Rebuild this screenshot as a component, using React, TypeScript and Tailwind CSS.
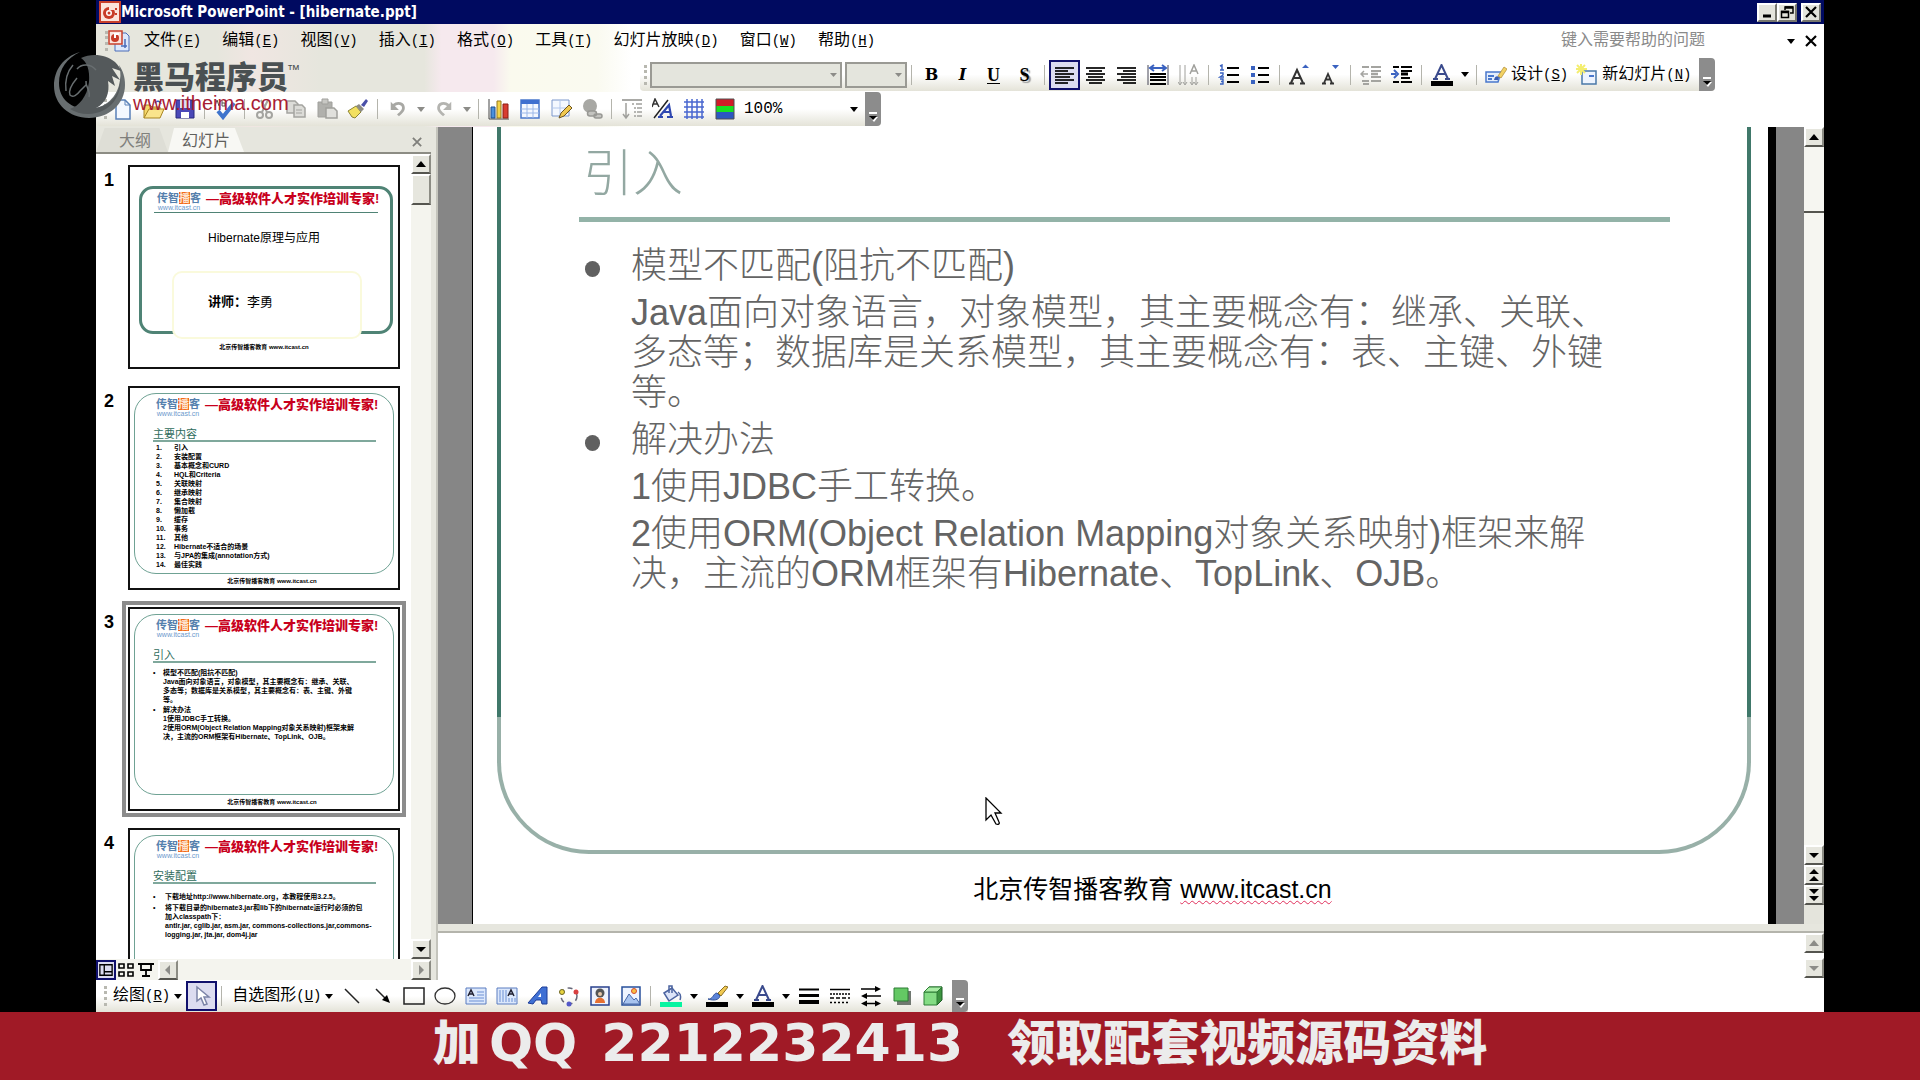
import type { ReactNode } from "react";

const DARK = "#3a4a8c";

function Icon({ children, size = 22 }: { children: ReactNode; size?: number }) {
  return (
    <svg width={size} height={size} viewBox="0 0 22 22" fill="none" aria-hidden="true" className="shrink-0">
      {children}
    </svg>
  );
}

function ToolButton({
  label,
  active = false,
  children,
}: {
  label: string;
  active?: boolean;
  children: ReactNode;
}) {
  return (
    <button
      type="button"
      aria-label={label}
      className={
        active
          ? "flex h-[30px] w-[31px] shrink-0 items-center justify-center border-2 border-[#10106c] bg-[#dcdcf0]"
          : "flex h-[30px] w-[31px] shrink-0 items-center justify-center"
      }
    >
      {children}
    </button>
  );
}

function Arrow({ label, dim = false }: { label: string; dim?: boolean }) {
  return (
    <button type="button" aria-label={label} className="flex h-[30px] w-[15px] shrink-0 items-center justify-center">
      <svg width="8" height="5" viewBox="0 0 8 5" aria-hidden="true">
        <path d="M0 0h8L4 5z" fill={dim ? "#8c8c88" : "#000"} />
      </svg>
    </button>
  );
}

function Combo({ label, width }: { label: string; width: string }) {
  return (
    <span className={`relative ml-[3px] h-[26px] shrink-0 ${width}`}>
      <select
        aria-label={label}
        disabled
        className="block h-full w-full appearance-none border-2 border-[#9a9a94] bg-[#e4e5dd]"
      />
      <svg width="7" height="4" viewBox="0 0 7 4" className="absolute top-[11px] right-[5px]" aria-hidden="true">
        <path d="M0 0h7L3.500 4z" fill="#8c8c88" />
      </svg>
    </span>
  );
}

function Sep() {
  return <span className="mx-1 h-5 w-px shrink-0 bg-[#b4b4ac]" />;
}

function Handle() {
  return <span className="h-5 w-[3px] shrink-0 border-l-[3px] border-dotted border-[#b8b8b0]" />;
}

function BarEnd({ label }: { label: string }) {
  return (
    <button
      type="button"
      aria-label={label}
      className="flex h-full w-4 shrink-0 items-end justify-center rounded-r bg-[#8c8c8c] pb-1"
    >
      <svg width="10" height="10" viewBox="0 0 10 10" aria-hidden="true">
        <path d="M1 1h8" stroke="#fff" strokeWidth="2" />
        <path d="M2 5h8l-4 5z" fill="#fff" />
        <path d="M1 4h8L5 8z" fill="#000" />
      </svg>
    </button>
  );
}

function Hot({ text, hotkey }: { text: string; hotkey: string }) {
  return (
    <>
      {text}
      <span className="text-sm">
        (<u>{hotkey}</u>)
      </span>
    </>
  );
}

const menus = [
  ["文件", "F"],
  ["编辑", "E"],
  ["视图", "V"],
  ["插入", "I"],
  ["格式", "O"],
  ["工具", "T"],
  ["幻灯片放映", "D"],
  ["窗口", "W"],
  ["帮助", "H"],
];

function PptLogo() {
  return (
    <Icon>
      <rect x="1" y="1" width="20" height="20" fill="#fbe4dc" stroke="#c8402c" strokeWidth="2" />
      <circle cx="10" cy="12" r="6" fill="#c83c28" />
      <circle cx="10" cy="12" r="3" fill="#fff" />
      <circle cx="10" cy="12" r="1.5" fill="#c83c28" />
      <path d="M10 4v5h7V4z" fill="#fbe4dc" />
      <path d="M17 7v2M17 12v2" stroke="#c83c28" strokeWidth="2" />
    </Icon>
  );
}

function TitleBar() {
  const box =
    "flex h-[19px] w-5 items-center justify-center border-2 border-t-white border-l-white border-r-[#77776f] border-b-[#77776f] bg-[#e4e4dc]";
  return (
    <header className="flex h-6 shrink-0 items-center bg-[#000a60] px-[3px]">
      <PptLogo />
      <h1 className="font-['DejaVu_Sans_Condensed','DejaVu_Sans',sans-serif] text-[15px] leading-6 font-bold text-white">
        Microsoft PowerPoint - [hibernate.ppt]
      </h1>
      <div className="ml-auto flex">
        <button type="button" aria-label="最小化" className={box}>
          <svg width="14" height="14" viewBox="0 0 14 14">
            <path d="M3 11h8" stroke="#000" strokeWidth="3" />
          </svg>
        </button>
        <button type="button" aria-label="还原" className={box}>
          <svg width="14" height="14" viewBox="0 0 14 14" fill="none" stroke="#000">
            <path d="M5 5V2h8v6h-3" strokeWidth="1.5" />
            <path d="M5 2.5h8M1 7h8" strokeWidth="2.5" />
            <path d="M1.500 6.500h7v6h-7z" strokeWidth="1.5" />
          </svg>
        </button>
        <button type="button" aria-label="关闭" className={`${box} ml-1`}>
          <svg width="14" height="14" viewBox="0 0 14 14">
            <path d="M2 2l10 10M12 2L2 12" stroke="#000" strokeWidth="2.2" />
          </svg>
        </button>
      </div>
    </header>
  );
}

function MenuBar() {
  return (
    <nav className="flex h-8 shrink-0 items-center pt-[2px] pl-[9px]">
      <Handle />
      <span className="flex w-9">
        <Icon>
          <path d="M7 3h11l3 3v15H7z" fill="#dce8fb" stroke="#4a6cb8" />
          <path d="M17 9v9M13 16h6" stroke="#4a6cb8" strokeWidth="1.500" />
          <rect x="1" y="1" width="13" height="13" fill="#fbe4dc" stroke="#c8402c" strokeWidth="1.500" />
          <circle cx="7" cy="8" r="4" fill="#c83c28" />
          <path d="M7 8V4h4" stroke="#fff" strokeWidth="2" />
        </Icon>
      </span>
      <div className="flex gap-[21px]">
        {menus.map(([text, key]) => (
          <button key={text} type="button" className="text-base leading-6 whitespace-nowrap text-black">
            <Hot text={text} hotkey={key} />
          </button>
        ))}
      </div>
      <input
        aria-label="键入需要帮助的问题"
        placeholder="键入需要帮助的问题"
        className="ml-auto h-6 w-[222px] bg-transparent text-base leading-6 outline-none placeholder:text-[#8a8a8a]"
      />
      <Arrow label="帮助列表" />
      <button type="button" aria-label="关闭文档" className="flex h-6 w-[26px] items-center justify-center">
        <svg width="12" height="12" viewBox="0 0 12 12">
          <path d="M1 1l10 10M11 1L1 11" stroke="#000" strokeWidth="2.200" />
        </svg>
      </button>
    </nav>
  );
}

function Lines({ rows, color = "#000" }: { rows: number[][]; color?: string }) {
  return (
    <Icon>
      {rows.map(([x1, x2, y]) => (
        <path key={`${x1}-${y}`} d={`M${x1} ${y}H${x2}`} stroke={color} strokeWidth="1.700" />
      ))}
    </Icon>
  );
}

function FormatBar() {
  return (
    <div className="flex h-9 shrink-0 items-start pt-[2px]">
      <div className="ml-[544px] flex h-[33px] items-center rounded bg-linear-to-b from-white from-50% to-[#e4e3d8] pl-1">
        <Handle />
        <Combo label="字体" width="w-48" />
        <Combo label="字号" width="w-[62px]" />
        <Sep />
        <div className="flex font-['Liberation_Serif',serif] text-lg font-bold text-black">
          <ToolButton label="加粗">
            <span className="font-['DejaVu_Serif',serif] text-base">B</span>
          </ToolButton>
          <ToolButton label="倾斜">
            <span className="font-['DejaVu_Serif',serif] text-base italic">I</span>
          </ToolButton>
          <ToolButton label="下划线">
            <span className="underline underline-offset-2">U</span>
          </ToolButton>
          <ToolButton label="阴影">
            <span className="text-shadow-[2px_2px_1px_#999]">S</span>
          </ToolButton>
        </div>
        <Sep />
        <ToolButton label="左对齐" active>
          <Lines rows={[[1, 20, 4], [1, 14, 7], [1, 20, 10], [1, 16, 13], [1, 20, 16], [1, 14, 19]]} />
        </ToolButton>
        <ToolButton label="居中">
          <Lines rows={[[1, 20, 4], [4, 17, 7], [1, 20, 10], [3, 18, 13], [1, 20, 16], [4, 17, 19]]} />
        </ToolButton>
        <ToolButton label="右对齐">
          <Lines rows={[[1, 20, 4], [7, 20, 7], [1, 20, 10], [5, 20, 13], [1, 20, 16], [7, 20, 19]]} />
        </ToolButton>
        <ToolButton label="分散对齐">
          <Icon>
            <path d="M1 1v20M21 1v20" stroke="#445" />
            <path d="M3 4h16M7 1L3 4l4 3M15 1l4 3-4 3" stroke="#3a62c0" strokeWidth="2" />
            <path d="M3 10h16M3 13h16M3 16h16M3 20h16" stroke="#000" strokeWidth="2" />
          </Icon>
        </ToolButton>
        <ToolButton label="更改文字方向">
          <Icon>
            <path d="M2 1v19M7 1v19M14 13v7M18 13v7M0 18l2 3 2-3M5 18l2 3 2-3M12 18l2 3 2-3M16 18l2 3 2-3" stroke="#a0a09c" />
            <path d="M12 10l4-9 4 9M13 7h5" stroke="#a0a09c" strokeWidth="1.500" />
          </Icon>
        </ToolButton>
        <Sep />
        <ToolButton label="编号">
          <Icon>
            <path d="M9 4h12M9 11h12M9 18h12" stroke="#000" strokeWidth="2" />
            <path d="M2 2l2-1v5M2 6h4M2 9h3v2l-3 2h4M2 15h3v5H2M3 17.500h2" stroke="#3a62c0" strokeWidth="1.400" />
          </Icon>
        </ToolButton>
        <ToolButton label="项目符号">
          <Icon>
            <path d="M9 4h11M9 11h11M9 18h11" stroke="#000" strokeWidth="2" />
            <path d="M2 2h4v4H2zM2 9h4v4H2zM2 16h4v4H2z" fill="#3a62c0" />
          </Icon>
        </ToolButton>
        <Sep />
        <ToolButton label="增大字号">
          <Icon>
            <path d="M2 19L8 6l6 13M4.500 14h7M0 19.500h5M11 19.500h5" stroke="#333" strokeWidth="2" />
            <path d="M13 4l3.500-3.500L20 4z" fill="#3a62c0" />
          </Icon>
        </ToolButton>
        <ToolButton label="减小字号">
          <Icon>
            <path d="M4 19l4-9 4 9M5.500 15.500h5M2 19.500h4M10 19.500h4" stroke="#333" strokeWidth="1.800" />
            <path d="M12 1h7l-3.500 4z" fill="#3a62c0" />
          </Icon>
        </ToolButton>
        <Sep />
        <ToolButton label="减少缩进量">
          <Icon>
            <path d="M2 3h7M11 3h10M11 7h10M11 13h10M2 17h7M11 17h10M3 20h6" stroke="#a4a4a0" strokeWidth="1.800" />
            <path d="M11 10h7" stroke="#a4a4a0" strokeWidth="2.500" />
            <path d="M8 10H1M4 7l-3 3 3 3" stroke="#a4a4a0" strokeWidth="1.500" />
          </Icon>
        </ToolButton>
        <ToolButton label="增加缩进量">
          <Icon>
            <path d="M2 3h6M10 3h11M10 7h11M10 14h9M2 18h6M10 18h11" stroke="#000" strokeWidth="2" />
            <path d="M10 10h7" stroke="#000" strokeWidth="3" />
            <path d="M0 10h5M3 6l4 4-4 4" stroke="#3a62c0" strokeWidth="2" />
          </Icon>
        </ToolButton>
        <Sep />
        <ToolButton label="字体颜色">
          <FontColor />
        </ToolButton>
        <Arrow label="字体颜色列表" />
        <Sep />
        <button type="button" className="ml-1 flex items-center gap-1 text-base leading-6 whitespace-nowrap text-black">
          <Icon>
            <path d="M1 8h15l-3 10H1z" fill="#e4eefc" stroke="#4a78cc" strokeWidth="1.500" />
            <path d="M3 12h6M3 15h4" stroke="#4a78cc" strokeWidth="2" />
            <path d="M9 16c1-5 4-4 5-3l-1 3z" fill="#3a5cb0" />
            <path d="M13 12l6-9 3 2-6 9z" fill="#f2d264" stroke="#b08a30" strokeWidth=".700" />
          </Icon>
          <span>
            <Hot text="设计" hotkey="S" />
          </span>
        </button>
        <button type="button" className="ml-2 flex items-center gap-1 text-base leading-6 whitespace-nowrap text-black">
          <Icon>
            <path d="M6 7h14v13H6z" fill="#eef4fe" stroke="#4a78a8" strokeWidth="1.500" />
            <path d="M13 12h5" stroke="#4a78cc" strokeWidth="2" />
            <path d="M5 0v11M0 5h11M1 1l8 8M9 1L1 9" stroke="#f4ee70" strokeWidth="2" />
          </Icon>
          <span>
            <Hot text="新幻灯片" hotkey="N" />
          </span>
        </button>
        <span className="w-2 shrink-0" />
        <BarEnd label="工具栏选项" />
      </div>
    </div>
  );
}

function FontColor() {
  return (
    <Icon>
      <path d="M4 15L10.500 1 17 15M7 10h7M2 15h5M14 15h5" stroke={DARK} strokeWidth="2" />
      <path d="M0 17h22v5H0z" fill="#000" />
    </Icon>
  );
}

function StandardBar() {
  return (
    <div className="flex h-[35px] shrink-0 items-start">
      <div className="flex h-[34px] items-center rounded bg-linear-to-b from-white from-50% to-[#e4e3d8] pl-2">
        <Handle />
        <ToolButton label="新建">
          <Icon>
            <path d="M4 2h9l5 5v14H4z" fill="#f4f8ff" stroke="#5a80b8" strokeWidth="1.500" />
            <path d="M13 2v5h5" stroke="#5a80b8" />
          </Icon>
        </ToolButton>
        <ToolButton label="打开">
          <Icon>
            <path d="M1 20V7h6l2 2h8v3" fill="#f4d668" stroke="#a88420" />
            <path d="M1 20l5-9h15l-4 9z" fill="#fae48c" stroke="#a88420" />
            <path d="M12 5c2-3 5-2 6 1" stroke="#3a62c0" strokeWidth="1.500" />
          </Icon>
        </ToolButton>
        <ToolButton label="保存">
          <Icon>
            <path d="M2 2h18v18H2z" fill="#4a48b8" stroke="#28287c" />
            <path d="M6 2h10v8H6z" fill="#dde0f4" />
            <path d="M7 14h8v6H7z" fill="#fff" />
          </Icon>
        </ToolButton>
        <Sep />
        <ToolButton label="拼写检查">
          <Icon>
            <path d="M4 13l5 6L20 5" stroke="#3f74cc" strokeWidth="4" />
            <path d="M1 8l2-6 2 6M8 2v6h3V5H8" stroke="#555" />
          </Icon>
        </ToolButton>
        <Sep />
        <ToolButton label="剪切">
          <Icon>
            <path d="M7 2l6 12M14 2L8 14" stroke="#a4a4a0" strokeWidth="2" />
            <circle cx="6" cy="17" r="3" stroke="#a4a4a0" strokeWidth="2" />
            <circle cx="15" cy="17" r="3" stroke="#a4a4a0" strokeWidth="2" />
          </Icon>
        </ToolButton>
        <ToolButton label="复制">
          <Icon>
            <path d="M2 3h8l3 3v9H2z" fill="#dcdcd8" stroke="#a4a4a0" strokeWidth="1.500" />
            <path d="M9 7h8l3 3v9H9z" fill="#dcdcd8" stroke="#a4a4a0" strokeWidth="1.500" />
            <path d="M11 12h6M11 15h6" stroke="#a4a4a0" />
          </Icon>
        </ToolButton>
        <ToolButton label="粘贴">
          <Icon>
            <path d="M2 4h14v15H2z" fill="#b0b0ac" stroke="#a0a09c" />
            <path d="M6 1h6v5H6z" fill="#c8c8c4" stroke="#a0a09c" />
            <path d="M10 10h8l3 3v7H10z" fill="#e0e0dc" stroke="#a0a09c" strokeWidth="1.500" />
          </Icon>
        </ToolButton>
        <ToolButton label="格式刷">
          <Icon>
            <path d="M1 13l8-5 5 6-6 6-3-1z" fill="#f2e060" stroke="#8c8434" />
            <path d="M9 8l3-2 5 5-3 3z" fill="#8c8c84" />
            <path d="M14 7l5-6 2 2-4 6z" fill="#4a50a8" />
          </Icon>
        </ToolButton>
        <Sep />
        <ToolButton label="撤消">
          <Icon size={20}>
            <path d="M6 7c5-4 11-2 11 3 0 4-3 5-6 8" stroke="#a8a8a4" strokeWidth="3" />
            <path d="M3 3v9h9z" fill="#a8a8a4" />
          </Icon>
        </ToolButton>
        <Arrow label="撤消列表" dim />
        <ToolButton label="恢复">
          <Icon size={20}>
            <path d="M16 7C11 3 5 5 5 10c0 4 3 5 6 8" stroke="#b4b4b0" strokeWidth="3" />
            <path d="M19 3v9h-9z" fill="#b4b4b0" />
          </Icon>
        </ToolButton>
        <Arrow label="恢复列表" dim />
        <Sep />
        <ToolButton label="插入图表">
          <Icon>
            <path d="M1 1v20h20" stroke="#444" />
            <path d="M3 9h4v11H3z" fill="#4a90dc" stroke="#1c4c90" />
            <path d="M9 3h4v17H9z" fill="#f4d448" stroke="#94781c" />
            <path d="M15 6h5v14h-5z" fill="#d83c30" stroke="#8c1c14" />
          </Icon>
        </ToolButton>
        <ToolButton label="插入表格">
          <Icon>
            <path d="M2 2h18v18H2z" fill="#f4f8ff" stroke="#4a78cc" strokeWidth="1.500" />
            <path d="M2 2h18v4H2z" fill="#3f70d0" />
            <path d="M8 6v14M14 6v14M2 11h18M2 15h18" stroke="#9cb8e8" />
          </Icon>
        </ToolButton>
        <ToolButton label="表格和边框">
          <Icon>
            <path d="M2 2h17v16H2z" fill="#f4f8ff" stroke="#7c98cc" />
            <path d="M10 2v16M2 10h17" stroke="#b4c8ec" />
            <path d="M9 20l2-5 8-8 3 3-8 8z" fill="#f0c850" stroke="#6c5420" />
          </Icon>
        </ToolButton>
        <ToolButton label="插入超链接">
          <Icon>
            <circle cx="9" cy="8" r="7" fill="#a8a8a4" />
            <path d="M9 13h4a2 2 0 010 5H9a2 2 0 010-5M15 16h4a2 2 0 010 4h-4a2 2 0 010-4" fill="#c4c4c0" stroke="#989894" strokeWidth="1.500" />
          </Icon>
        </ToolButton>
        <Sep />
        <ToolButton label="全部展开">
          <Icon>
            <path d="M1 2h20" stroke="#8c8c88" strokeWidth="1.500" />
            <path d="M5 5v14M2 16l3 4 3-4" stroke="#a0a09c" strokeWidth="1.500" />
            <path d="M11 6h2M15 6h6M13 10h2M16 10h5M13 14h2M16 14h5M13 18h2M16 18h5" stroke="#a0a09c" strokeWidth="1.500" />
          </Icon>
        </ToolButton>
        <ToolButton label="显示格式">
          <Icon>
            <path d="M0 9l3-8 4 8M1 6h5" stroke="#333" strokeWidth="1.500" />
            <path d="M2 20L16 2" stroke="#222" strokeWidth="1.500" />
            <path d="M8 18l9-11 2 11M12 14h6M6 19h5M15 19h6" stroke="#2f48b0" strokeWidth="2.200" />
          </Icon>
        </ToolButton>
        <ToolButton label="显示网格">
          <Icon>
            <path d="M4 1v20M9 1v20M14 1v20M19 1v20M1 4h20M1 9h20M1 14h20M1 19h20" stroke="#4a68d0" strokeWidth="1.500" />
          </Icon>
        </ToolButton>
        <ToolButton label="颜色/灰度">
          <Icon>
            <path d="M2 1h18v7H2z" fill="#d01c28" />
            <path d="M2 8h18v6H2z" fill="#18e020" />
            <path d="M2 14h18v7H2z" fill="#2c58c0" />
            <path d="M2 1h18v20H2z" stroke="#505050" />
          </Icon>
        </ToolButton>
        <input
          aria-label="显示比例"
          defaultValue="100%"
          className="ml-1 h-6 w-[102px] bg-transparent text-base leading-6 text-black outline-none"
        />
        <Arrow label="显示比例列表" />
        <span className="w-1 shrink-0" />
        <BarEnd label="工具栏选项" />
      </div>
    </div>
  );
}

function ScrollButton({ label, d, dim = false }: { label: string; d: string; dim?: boolean }) {
  return (
    <button
      type="button"
      aria-label={label}
      className="flex h-5 w-full shrink-0 items-center justify-center border-2 border-t-white border-l-white border-r-[#8c8c84] border-b-[#55554f] bg-[#e6e6de]"
    >
      <svg width="12" height="14" viewBox="0 0 12 14" aria-hidden="true">
        <path d={d} fill={dim ? "#8c8c88" : "#000"} />
      </svg>
    </button>
  );
}

const UP = "M1 10h10L6 4z";
const DOWN = "M1 5h10L6 10z";

function Brand() {
  return (
    <div className="mt-1 ml-5 flex items-start gap-1">
      <div className="w-[46px] shrink-0 text-center">
        <p className="text-[11px] leading-[12px] font-bold whitespace-nowrap text-[#5580ad]">
          传智<span className="bg-[#f26a1c] text-[#fde4d0]">播</span>客
        </p>
        <p className="text-[7px] leading-[7px] text-[#6a98cc]">www.itcast.cn</p>
      </div>
      <p className="text-[13px] leading-[14px] font-black whitespace-nowrap text-[#c8001c]">—高级软件人才实作培训专家!</p>
    </div>
  );
}

function Frame({ title, footer = true, children }: { title: string; footer?: boolean; children: ReactNode }) {
  return (
    <>
      <div className="mx-1 mt-[5px] h-[181px] shrink-0 rounded-[22px] border border-[#6fa294]">
        <Brand />
        <div className="mr-[17px] ml-[18px]">
          <h3 className="mt-[11px] border-b-2 border-[#7fa89c] text-[11px] leading-[12px] text-[#2f6c5c]">{title}</h3>
          {children}
        </div>
      </div>
      {footer && (
        <p className="pl-4 text-center text-[6px] leading-[14px] font-bold text-black">北京传智播客教育 www.itcast.cn</p>
      )}
    </>
  );
}

const topics = [
  "引入",
  "安装配置",
  "基本概念和CURD",
  "HQL和Criteria",
  "关联映射",
  "继承映射",
  "集合映射",
  "懒加载",
  "缓存",
  "事务",
  "其他",
  "Hibernate不适合的场景",
  "与JPA的集成(annotation方式)",
  "最佳实践",
];

function CoverThumb() {
  return (
    <>
      <div className="relative mr-[5px] ml-[9px] mt-[19px] h-[148px] rounded-[14px] border-[3px] border-[#4f8375]">
        <div className="-mt-px -ml-[6px]">
          <Brand />
        </div>
        <hr className="mx-3 mt-px border-[#4f8375]" />
        <h3 className="mt-[17px] pl-[66px] text-xs leading-4 whitespace-nowrap text-black">Hibernate原理与应用</h3>
        <div className="absolute top-[82px] left-[30px] flex h-[68px] w-[190px] items-center rounded-[10px] border-2 border-[#fafadc] bg-white pb-[6px] pl-[34px]">
          <p className="text-[13px] leading-4 text-black">
            <b>讲师：</b>李勇
          </p>
        </div>
      </div>
      <p className="mt-[6px] text-center text-[6px] leading-[14px] font-bold text-black">
        北京传智播客教育 www.itcast.cn
      </p>
    </>
  );
}

function TopicsThumb() {
  return (
    <Frame title="主要内容">
      <ol className="mt-px text-[7px] leading-[9px] font-bold text-black">
        {topics.map((topic, i) => (
          <li key={topic} className="flex">
            <span className="w-[21px] shrink-0 pl-[3px]">{i + 1}.</span>
            {topic}
          </li>
        ))}
      </ol>
    </Frame>
  );
}

function IntroThumb() {
  return (
    <Frame title="引入">
      <ul className="mt-[5px] flex flex-col gap-px text-[7px] leading-[9px] font-bold whitespace-nowrap text-black">
        <li className="flex">
          <span className="w-[10px] shrink-0">•</span>
          <p>
            模型不匹配(阻抗不匹配)
            <br />
            Java面向对象语言，对象模型，其主要概念有：继承、关联、
            <br />
            多态等；数据库是关系模型，其主要概念有：表、主键、外键
            <br />
            等。
          </p>
        </li>
        <li className="flex">
          <span className="w-[10px] shrink-0">•</span>
          <p>
            解决办法
            <br />
            1使用JDBC手工转换。
            <br />
            2使用ORM(Object Relation Mapping对象关系映射)框架来解
            <br />
            决，主流的ORM框架有Hibernate、TopLink、OJB。
          </p>
        </li>
      </ul>
    </Frame>
  );
}

function SetupThumb() {
  return (
    <Frame title="安装配置" footer={false}>
      <ul className="mt-[8px] flex flex-col gap-[2px] text-[7px] leading-[9px] font-bold whitespace-nowrap text-black">
        <li className="flex">
          <span className="w-[12px] shrink-0">•</span>
          下载地址http://www.hibernate.org，本教程使用3.2.5。
        </li>
        <li className="flex">
          <span className="w-[12px] shrink-0">•</span>
          <p>
            将下载目录的hibernate3.jar和lib下的hibernate运行时必须的包
            <br />
            加入classpath下：
            <br />
            antlr.jar, cglib.jar, asm.jar, commons-collections.jar,commons-
            <br />
            logging.jar, jta.jar, dom4j.jar
          </p>
        </li>
      </ul>
    </Frame>
  );
}

const thumbs = [<CoverThumb />, <TopicsThumb />, <IntroThumb />, <SetupThumb />];

function SlidePanel() {
  return (
    <aside className="flex w-[342px] shrink-0 flex-col border-r-2 border-[#c4c4bc] bg-[#e6e6de] pr-[5px]">
      <div className="flex h-[27px] shrink-0 items-end border-b-2 border-[#8c8c84] text-base leading-[26px] text-[#80807c]">
        <button type="button" className="h-6 w-[72px] bg-[#deded6] pl-[6px] [clip-path:polygon(12%_0,88%_0,100%_100%,0_100%)]">
          大纲
        </button>
        <button type="button" className="h-6 w-[76px] bg-[#f8f8f4] text-[#60605c] [clip-path:polygon(8%_0,88%_0,100%_100%,0_100%)]">
          幻灯片
        </button>
        <button type="button" aria-label="关闭窗格" className="mr-2 mb-1 ml-auto">
          <svg width="11" height="11" viewBox="0 0 12 12">
            <path d="M1 1l9 9M10 1l-9 9" stroke="#80807c" strokeWidth="2" />
          </svg>
        </button>
      </div>
      <div className="flex min-h-0 flex-1">
        <ol className="flex min-w-0 flex-1 flex-col gap-[17px] overflow-hidden bg-white pt-[11px]">
          {thumbs.map((thumb, i) => (
            <li key={i} className="flex shrink-0">
              <span className="w-8 shrink-0 pt-[5px] pl-2 text-lg leading-5 font-bold text-black">{i + 1}</span>
              <button
                type="button"
                aria-label={`幻灯片 ${i + 1}`}
                className={
                  i === 2
                    ? "flex h-[204px] w-[272px] flex-col items-stretch overflow-hidden border-2 border-[#111] bg-white text-left outline-4 outline-offset-2 outline-[#8c8c8c]"
                    : "flex h-[204px] w-[272px] flex-col items-stretch overflow-hidden border-2 border-[#111] bg-white text-left"
                }
              >
                {thumb}
              </button>
            </li>
          ))}
        </ol>
        <div className="flex w-5 shrink-0 flex-col bg-[#f4f4ee]">
          <ScrollButton label="向上滚动" d={UP} />
          <span className="h-[31px] border-2 border-t-white border-l-white border-r-[#8c8c84] border-b-[#55554f] bg-[#e6e6de]" />
          <span className="flex-1" />
          <ScrollButton label="向下滚动" d={DOWN} />
        </div>
      </div>
      <div className="flex h-[21px] shrink-0 items-center bg-[#f4f4ee]">
        <button type="button" aria-label="普通视图" className="flex h-5 w-5 items-center justify-center border-2 border-[#10106c] bg-[#dcdcf0]">
          <svg width="14" height="14" viewBox="0 0 16 14" fill="none" stroke="#000" strokeWidth="1.500">
            <path d="M1 1h14v12H1zM6 1v12M6 9h9" />
          </svg>
        </button>
        <button type="button" aria-label="幻灯片浏览视图" className="flex w-5 justify-center">
          <svg width="16" height="14" viewBox="0 0 16 14" fill="none" stroke="#000" strokeWidth="1.600">
            <path d="M1 1h5v4H1zM10 1h5v4h-5zM1 9h5v4H1zM10 9h5v4h-5z" />
          </svg>
        </button>
        <button type="button" aria-label="幻灯片放映" className="flex w-5 justify-center">
          <svg width="16" height="14" viewBox="0 0 16 14" fill="none" stroke="#000" strokeWidth="1.800">
            <path d="M0 1h16M3 1v6h10V1M8 7v5M4 13h8" />
          </svg>
        </button>
        <span className="ml-[2px] w-5">
          <ScrollButton label="向左滚动" d="M8 2v10L3 7z" dim />
        </span>
        <span className="ml-auto w-5">
          <ScrollButton label="向右滚动" d="M4 2v10l5-5z" dim />
        </span>
      </div>
    </aside>
  );
}

function Bullet() {
  return <span className="mt-[15px] mr-[31px] ml-[6px] h-4 w-[15px] shrink-0 rounded-full bg-[#606060]" />;
}

function Slide() {
  return (
    <article className="flex min-w-0 flex-1 flex-col border-r-8 border-l border-black bg-white">
      <div className="mr-[17px] ml-[24px] h-[590px] border-x-4 border-[#40786a] pr-[77px] pl-[78px]">
        <h2 className="flex h-[95px] items-center border-b-[5px] border-[#93b3a8] pt-1 pl-1 text-[50px] leading-[60px] font-light text-[#93a8a2]">
          引入
        </h2>
        <ul className="mt-6 flex flex-col gap-[7px] text-4xl leading-[40px] font-light whitespace-nowrap text-[#646464]">
          <li className="flex">
            <Bullet />
            <div className="flex flex-col gap-[7px]">
              <p>模型不匹配(阻抗不匹配)</p>
              <p>
                Java面向对象语言，对象模型，其主要概念有：继承、关联、
                <br />
                多态等；数据库是关系模型，其主要概念有：表、主键、外键
                <br />
                等。
              </p>
            </div>
          </li>
          <li className="flex">
            <Bullet />
            <div className="flex flex-col gap-[7px]">
              <p>解决办法</p>
              <p>1使用JDBC手工转换。</p>
              <p>
                2使用ORM(Object Relation Mapping对象关系映射)框架来解
                <br />
                决，主流的ORM框架有Hibernate、TopLink、OJB。
              </p>
            </div>
          </li>
        </ul>
      </div>
      <div className="mr-[17px] ml-[24px] h-[137px] rounded-b-[92px] border-x-4 border-b-4 border-[#98b0a8]" />
      <footer className="flex flex-1 items-center justify-center pl-16 text-[25px] leading-8 text-black">
        <p>
          北京传智播客教育{" "}
          <span className="underline decoration-[#e0305c] decoration-wavy decoration-1 underline-offset-2">www.itcast.cn</span>
        </p>
      </footer>
    </article>
  );
}

function Workspace() {
  return (
    <div className="flex min-w-0 flex-1 flex-col">
      <section className="flex min-h-0 flex-1 bg-[#868686] pl-[34px]">
        <Slide />
        <div className="ml-7 flex w-5 shrink-0 flex-col bg-[#f6f6f1]">
          <ScrollButton label="向上滚动" d={UP} />
          <span className="h-[66px] border-b-2 border-[#55554f] bg-[#f6f6f1]" />
          <span className="flex-1" />
          <ScrollButton label="向下滚动" d={DOWN} />
          <ScrollButton label="上一张幻灯片" d="M1 6h10L6 1zM1 13h10L6 8z" />
          <ScrollButton label="下一张幻灯片" d="M1 1h10L6 6zM1 8h10l-5 5z" />
          <span className="h-[19px] bg-[#e4e4dc]" />
        </div>
      </section>
      <div className="h-[9px] shrink-0 border-b-2 border-[#b4b4ac] bg-[#e6e6de]" />
      <section className="flex h-[47px] shrink-0 bg-white">
        <textarea aria-label="备注" className="min-w-0 flex-1 resize-none outline-none" />
        <div className="flex w-5 shrink-0 flex-col justify-between pb-[2px]">
          <ScrollButton label="备注向上滚动" d={UP} dim />
          <ScrollButton label="备注向下滚动" d={DOWN} dim />
        </div>
      </section>
    </div>
  );
}

function DrawingBar() {
  return (
    <div className="flex h-8 shrink-0 bg-white">
      <div className="flex items-center bg-linear-to-b from-white from-50% to-[#e4e3d8] pl-2">
        <Handle />
        <button type="button" className="ml-[6px] text-base leading-6 whitespace-nowrap text-black">
          <Hot text="绘图" hotkey="R" />
        </button>
        <Arrow label="绘图菜单" />
        <span className="w-px" />
        <ToolButton label="选择对象" active>
          <Icon>
            <path d="M6 2v14l4-3 3 7 3-1-3-7h5z" fill="#fff" stroke="#7c84a8" strokeWidth="1.500" />
          </Icon>
        </ToolButton>
        <Sep />
        <button type="button" className="ml-[6px] text-base leading-6 whitespace-nowrap text-black">
          <Hot text="自选图形" hotkey="U" />
        </button>
        <Arrow label="自选图形菜单" />
        <ToolButton label="直线">
          <Icon>
            <path d="M4 4l14 14" stroke="#222" strokeWidth="1.500" />
          </Icon>
        </ToolButton>
        <ToolButton label="箭头">
          <Icon>
            <path d="M4 4l10 10" stroke="#222" strokeWidth="1.500" />
            <path d="M18 18l-8-3 5-5z" fill="#000" />
          </Icon>
        </ToolButton>
        <ToolButton label="矩形">
          <Icon>
            <path d="M1 3h20v16H1z" stroke="#222" strokeWidth="1.500" />
          </Icon>
        </ToolButton>
        <ToolButton label="椭圆">
          <Icon>
            <ellipse cx="11" cy="11" rx="10" ry="8" stroke="#333" strokeWidth="1.300" />
          </Icon>
        </ToolButton>
        <ToolButton label="文本框">
          <Icon>
            <path d="M1 3h20v16H1z" fill="#dce8fc" stroke="#5a7cc0" />
            <path d="M3 11l3-6 3 6M4 9h4" stroke="#223" strokeWidth="1.500" />
            <path d="M12 7h7M12 10h7M4 13h15M4 16h15" stroke="#6c90d4" />
          </Icon>
        </ToolButton>
        <ToolButton label="竖排文本框">
          <Icon>
            <path d="M1 3h20v16H1z" fill="#dce8fc" stroke="#5a7cc0" />
            <path d="M12 11l3-6 3 6M13 9h4" stroke="#223" strokeWidth="1.500" />
            <path d="M4 5v12M7 5v12M10 5v12M13 13v4M16 13v4M19 13v4" stroke="#6c90d4" />
          </Icon>
        </ToolButton>
        <ToolButton label="艺术字">
          <Icon>
            <path d="M1 18L15 2h5v17h-5l-1-4H9l-3 4z" fill="#3f70d4" stroke="#1c3c98" />
            <path d="M11 12l3-4v4z" fill="#fff" />
          </Icon>
        </ToolButton>
        <ToolButton label="组织结构图">
          <Icon>
            <circle cx="11" cy="11" r="8" stroke="#667" strokeWidth="1.500" strokeDasharray="5 4" />
            <circle cx="4" cy="7" r="2.500" fill="#e8d440" stroke="#6c6420" />
            <circle cx="18" cy="7" r="2.500" fill="#d84040" />
            <circle cx="11" cy="19" r="2.500" fill="#5458c8" />
          </Icon>
        </ToolButton>
        <ToolButton label="剪贴画">
          <Icon>
            <path d="M2 2h18v18H2z" fill="#eef2fc" stroke="#28408c" strokeWidth="1.500" />
            <circle cx="11" cy="8" r="4.500" fill="#555" />
            <circle cx="11" cy="9" r="2" fill="#e8c8a8" />
            <path d="M6 18c0-7 10-7 10 0z" fill="#e87030" />
          </Icon>
        </ToolButton>
        <ToolButton label="图片">
          <Icon>
            <path d="M2 2h18v18H2z" fill="#eef4ff" stroke="#28509c" strokeWidth="1.500" />
            <circle cx="14" cy="6" r="2.500" fill="#f8c040" stroke="#d84c30" />
            <path d="M3 19l6-10 5 6 2-2 4 6z" fill="#a8c4f0" stroke="#4868a8" />
          </Icon>
        </ToolButton>
        <Sep />
        <ToolButton label="填充颜色">
          <Icon>
            <path d="M4 8l8-5 6 7-9 6z" fill="#dce4f8" stroke="#4c64a0" strokeWidth="1.500" />
            <path d="M9 8V1h3v7M18 7c3 2 3 5 2 8" stroke="#4c64a0" strokeWidth="1.500" />
            <path d="M0 17h22v5H0z" fill="#08f4a0" />
          </Icon>
        </ToolButton>
        <Arrow label="填充颜色列表" />
        <ToolButton label="线条颜色">
          <Icon>
            <path d="M2 14c5 1 5-6 9-6l3 3c-1 4-6 5-12 3z" fill="#5c84d8" stroke="#34549c" />
            <path d="M12 8l7-7 3 1-7 9z" fill="#f0c850" stroke="#8c7024" />
            <path d="M0 17h22v5H0z" fill="#000" />
          </Icon>
        </ToolButton>
        <Arrow label="线条颜色列表" />
        <ToolButton label="字体颜色">
          <FontColor />
        </ToolButton>
        <Arrow label="字体颜色列表" />
        <ToolButton label="线型">
          <Icon>
            <path d="M1 4.500h20" stroke="#000" strokeWidth="2" />
            <path d="M1 10.500h20" stroke="#000" strokeWidth="3" />
            <path d="M1 17h20" stroke="#000" strokeWidth="4" />
          </Icon>
        </ToolButton>
        <ToolButton label="虚线线型">
          <Icon>
            <path d="M1 4.500h20" stroke="#000" strokeWidth="1.500" />
            <path d="M1 9h20" stroke="#000" strokeWidth="1.500" strokeDasharray="2 1" />
            <path d="M1 13h20" stroke="#000" strokeWidth="1.500" strokeDasharray="4 2" />
            <path d="M1 17.500h20" stroke="#000" strokeWidth="1.500" strokeDasharray="2 2" />
          </Icon>
        </ToolButton>
        <ToolButton label="箭头样式">
          <Icon>
            <path d="M1 4h16M5 11h16M5 18.500h12" stroke="#000" strokeWidth="1.500" />
            <path d="M21 4l-6-3v6zM1 11l6-3v6zM1 18.500l6-3v6zM21 18.500l-6-3v6z" fill="#000" />
          </Icon>
        </ToolButton>
        <ToolButton label="阴影样式">
          <Icon>
            <path d="M6 6h14v14H6z" fill="#707870" />
            <path d="M3 3h14v13H3z" fill="#64c864" stroke="#2c7c34" />
          </Icon>
        </ToolButton>
        <ToolButton label="三维效果样式">
          <Icon>
            <path d="M2 7l5-5h13v13l-5 5z" fill="#3c9440" stroke="#1c5c24" />
            <path d="M2 7h13v13H2z" fill="#84dc84" stroke="#2c7c34" />
            <path d="M2 7l5-5h13l-5 5z" fill="#a8eca4" stroke="#2c7c34" />
          </Icon>
        </ToolButton>
        <span className="w-1 shrink-0" />
        <BarEnd label="工具栏选项" />
      </div>
    </div>
  );
}

function Watermark() {
  return (
    <div className="pointer-events-none absolute top-[51px] left-[53px] flex items-start">
      <svg width="74" height="68" viewBox="0 0 74 68" fill="none" aria-hidden="true">
        <path
          d="M27 1C10 6 1 19 1 35c0 18 15 32 35 32s36-14 36-33c0-8-2-14-6-20 1 5 2 9 1 15-2 17-15 29-32 29S6 48 6 32C6 18 14 7 27 1z"
          fill="#686e70"
        />
        <path
          d="M28 7c10-5 25-4 34 4 3 3 5 6 6 9l-9-3 8 12-8-4 3 10-7-5c2 12-2 22-12 27 16-3 25-15 24-31 3 17-9 37-32 37-7 0-13-2-18-5 9-3 17-12 19-27 1-12-2-20-8-24z"
          fill="#54595b"
        />
        <path d="M20 14c-7 8-8 18-7 26M24 18c5-6 14-5 19 1M24 27c-5 6-9 12-7 17 3 3 7 0 10-4l6-6M33 30c-1 6 5 9 3 16" stroke="#686e70" strokeWidth="1.500" />
      </svg>
      <div className="pt-[10px] pl-[6px]">
        <p className="flex items-start text-[31px] leading-[34px] font-black text-[#4a5052]">
          黑马程序员<span className="-ml-px text-[13px] leading-[18px] font-normal">™</span>
        </p>
        <p className="text-xl leading-[16px] text-[#a81c34]">www.itheima.com</p>
      </div>
    </div>
  );
}

export default function App() {
  return (
    <div className="relative flex h-screen flex-col overflow-hidden bg-black font-['Liberation_Sans','Noto_Sans_CJK_SC',sans-serif]">
      <main className="mx-24 flex min-h-0 flex-1 flex-col bg-white">
        <TitleBar />
        <div className="flex shrink-0 flex-col bg-[linear-gradient(90deg,#e6e6dd_0,#e6e6dd_7%,#f0e6e2_9%,#e6e6dd_13%,#e6e6dd_19%,#f6e9ee_20%,#f6e9ee_23%,#fafaee_24%,#fafaf0_29%,#fff_31%)] font-['Liberation_Mono','Noto_Sans_CJK_SC',monospace]">
          <MenuBar />
          <FormatBar />
          <StandardBar />
        </div>
        <div className="flex min-h-0 flex-1">
          <SlidePanel />
          <Workspace />
        </div>
        <div className="font-['Liberation_Mono','Noto_Sans_CJK_SC',monospace]">
          <DrawingBar />
        </div>
      </main>
      <footer className="flex h-[68px] shrink-0 items-center justify-center bg-[#a01a26] pb-[6px] font-['DejaVu_Sans','Noto_Sans_CJK_SC',sans-serif] text-5xl leading-[60px] font-black whitespace-nowrap text-[#ececec]">
        <p className="flex items-center">
          <span>加</span>
          <span className="pl-2 text-[52px]">QQ</span>
          <span className="pl-6 text-[52px]">2212232413</span>
          <span className="pl-11">领取配套视频源码资料</span>
        </p>
      </footer>
      <Watermark />
      <svg width="18" height="30" viewBox="0 0 18 30" className="pointer-events-none absolute top-[797px] left-[985px]" aria-hidden="true">
        <path d="M1 1v22l5-5 5 9c2 1 4 0 3-2l-4-9h6z" fill="#fff" stroke="#000" strokeWidth="1.300" />
      </svg>
    </div>
  );
}
